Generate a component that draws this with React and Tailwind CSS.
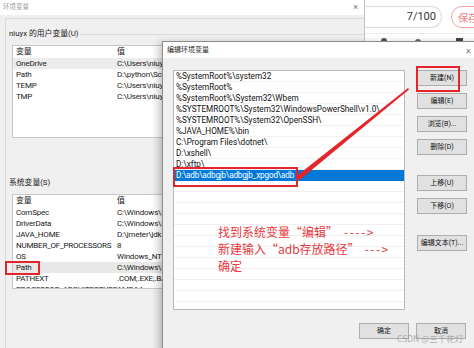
import React from "react";

const ui = { fontFamily: 'Roboto, "Noto Sans CJK SC", sans-serif' };
const cjk = { fontFamily: '"Noto Sans CJK SC", "Noto Sans", sans-serif' };

function Row({ a, b, hl }) {
  return (
    <div className={`flex h-[11px] items-center ${hl ? "bg-[#e8e8e8]" : ""}`}>
      <div className="w-[101px] shrink-0 whitespace-nowrap">{a}</div>
      <div className="whitespace-nowrap">{b}</div>
    </div>
  );
}

function LeftWindow() {
  return (
    <div className="relative z-0 w-[365px] h-full shrink-0 flex flex-col border-r border-[#c4c4c4] bg-[#f0f0f0]">
      <div className="h-[15px] bg-white flex items-center justify-between pl-[3px] pr-[6px] text-[6.5px] text-[#9a9a9a]">
        <span>环境变量</span>
        <span className="text-[9px] text-[#777]">×</span>
      </div>
      <div className="flex-1 pl-[5px] pt-[3px]">
        <div className="h-full border-l border-t border-[#dadada] pl-[3px] pt-[10px] text-[8px] tracking-[-0.2px] text-[#1a1a1a]">
          <div className="flex items-center h-[10px] gap-[2px] text-[7.8px] tracking-normal">
            <span className="whitespace-nowrap">niuyx 的用户变量(U)</span>
            <div className="flex-1 h-px bg-[#dadada]" />
          </div>
          <div className="ml-[3px] mt-[6px] w-[346px] h-[93px] bg-white border border-[#c8c8c8] pl-[3px] overflow-hidden">
            <div className="flex h-[11px] items-center">
              <div className="w-[101px]">变量</div>
              <div>值</div>
            </div>
            <div className="h-px" />
            <div className="-ml-[3px] pl-[3px] bg-[#ececec]">
              <Row a="OneDrive" b="C:\Users\niuyx\OneDrive" />
            </div>
            <Row a="Path" b="D:\python\Scripts\" />
            <Row a="TEMP" b="C:\Users\niuyx\AppData" />
            <Row a="TMP" b="C:\Users\niuyx\AppData" />
          </div>
          <div className="mt-[40px] h-[10px] flex items-center text-[7.8px] tracking-normal">系统变量(S)</div>
          <div className="ml-[3px] mt-[6px] w-[346px] h-[95px] bg-white border border-[#c8c8c8] overflow-hidden">
            <div className="pl-[3px] flex h-[12px] items-center">
              <div className="w-[101px]">变量</div>
              <div>值</div>
            </div>
            <div className="pl-[3px]"><Row a="ComSpec" b="C:\Windows\system32" /></div>
            <div className="pl-[3px]"><Row a="DriverData" b="C:\Windows\System32" /></div>
            <div className="pl-[3px]"><Row a="JAVA_HOME" b="D:\jmeter\jdk" /></div>
            <div className="pl-[3px]"><Row a="NUMBER_OF_PROCESSORS" b="8" /></div>
            <div className="pl-[3px]"><Row a="OS" b="Windows_NT" /></div>
            <div className="pl-[3px] bg-[#e8e8e8]"><Row a="Path" b="C:\Windows\system32" /></div>
            <div className="pl-[3px]"><Row a="PATHEXT" b=".COM;.EXE;.BAT" /></div>
            <div className="pl-[3px]"><Row a="PROCESSOR_ARCHITECTURE" b="AMD64" /></div>
          </div>
        </div>
      </div>
    </div>
  );
}

function WebPage() {
  return (
    <div className="flex-1 bg-white flex flex-col">
      <div className="flex pt-[6px] h-[33px] items-start">
        <div className="w-[77px] h-[22px] border-y border-r border-[#dcdcdc] rounded-r-full flex items-center justify-end pr-[5px] text-[11px] text-[#333]">
          7/100
        </div>
        <div className="ml-[9px] w-[40px] h-[22px] border border-[#f3a5a5] rounded-l-full flex items-center pl-[6px] text-[10px] text-[#f08080]" style={cjk}>
          保存
        </div>
      </div>
      <div className="h-px bg-[#ebebeb]" />
      <div className="flex h-[8px] items-end">
        <div className="ml-[16px] w-[6px] h-[4px] rounded-t-full bg-[#555]" />
        <div className="ml-[28px] w-[6px] h-[3px] rounded-t-full bg-[#666]" />
        <div className="ml-[35px] w-[7px] h-[4px] bg-[#444]" />
      </div>
    </div>
  );
}

function Btn({ children, className = "" }) {
  return (
    <div className={`w-[50px] h-[16px] shrink-0 bg-[#e1e1e1] border border-[#adadad] flex items-center justify-center text-[7px] text-[#111] ${className}`}>
      {children}
    </div>
  );
}

const paths = [
  "%SystemRoot%\\system32",
  "%SystemRoot%",
  "%SystemRoot%\\System32\\Wbem",
  "%SYSTEMROOT%\\System32\\WindowsPowerShell\\v1.0\\",
  "%SYSTEMROOT%\\System32\\OpenSSH\\",
  "%JAVA_HOME%\\bin",
  "C:\\Program Files\\dotnet\\",
  "D:\\xshell\\",
  "D:\\xftp\\",
];

function Dialog() {
  return (
    <div className="absolute left-[162px] top-[41px] w-[320px] h-[320px] border border-[#8c8c8c] bg-[#f0f0f0] shadow-[-3px_2px_8px_rgba(0,0,0,0.25)]">
      <div className="h-[16px] bg-white flex items-center justify-between pl-[4px] pr-[10px] text-[7px] text-[#222]">
        <span>编辑环境变量</span>
        <span className="text-[10px] text-[#444] font-light">×</span>
      </div>
      <div className="pl-[10px] pt-[12px]">
        <div className="flex gap-[12px]">
          <div className="w-[232px] h-[240px] bg-white border border-[#b9b9b9] overflow-hidden text-[8.2px] text-[#111]">
            {paths.map((p) => (
              <div key={p} className="h-[11px] flex items-center pl-[2px] border-b border-[#f3f3f3] whitespace-nowrap">
                {p}
              </div>
            ))}
            <div className="h-[11px] flex items-center pl-[2px] bg-[#0078d7] text-white whitespace-nowrap tracking-[-0.2px]">
              D:\adb\adbgjb\adbgjb_xpgod\adb
            </div>
            {Array.from({ length: 12 }).map((_, i) => (
              <div key={i} className="h-[11px] border-b border-[#f0f0f0]" />
            ))}
          </div>
          <div className="flex flex-col">
            <Btn>新建(N)</Btn>
            <Btn className="mt-[7px]">编辑(E)</Btn>
            <Btn className="mt-[7px]">浏览(B)...</Btn>
            <Btn className="mt-[7px]">删除(D)</Btn>
            <Btn className="mt-[20px]">上移(U)</Btn>
            <Btn className="mt-[7px]">下移(O)</Btn>
            <Btn className="mt-[21px]">编辑文本(T)...</Btn>
          </div>
        </div>
        <div className="flex gap-[7px] pl-[186px] mt-[13px]">
          <Btn className="border-[#0078d7] border-[1.5px]">确定</Btn>
          <Btn>取消</Btn>
        </div>
      </div>
    </div>
  );
}

export default function App() {
  return (
    <div className="relative w-[474px] h-[348px] overflow-hidden bg-white" style={ui}>
      <div className="flex h-full">
        <LeftWindow />
        <WebPage />
      </div>
      <Dialog />
      <div className="absolute left-[5px] top-[261px] w-[35px] h-[14px] border-2 border-[#e4262c]" />
      <div className="absolute left-[173px] top-[167px] w-[125px] h-[20px] border-2 border-[#e4262c]" />
      <div className="absolute left-[416px] top-[66px] w-[44px] h-[26px] border-2 border-[#e4262c]" />
      <svg className="absolute left-0 top-0" width="474" height="348" viewBox="0 0 474 348">
        <polygon points="408,88 409,89.5 299.5,180 296,176.5" fill="#e4262c" />
      </svg>
      <div className="absolute left-[218px] top-[223px] text-[12px] leading-[17px] text-[#e8383d] whitespace-nowrap" style={cjk}>
        <div>找到系统变量“编辑”<span className="ml-[6px] tracking-[1.5px]">----&gt;</span></div>
        <div>新建输入“adb存放路径”<span className="ml-[5px] tracking-[1.5px]">---&gt;</span></div>
        <div>确定</div>
      </div>
      <div className="absolute left-[397px] top-[332px] text-[8.5px] text-[rgba(150,150,150,0.75)] whitespace-nowrap" style={cjk}>
        CSDN @三千花灯
      </div>
    </div>
  );
}
